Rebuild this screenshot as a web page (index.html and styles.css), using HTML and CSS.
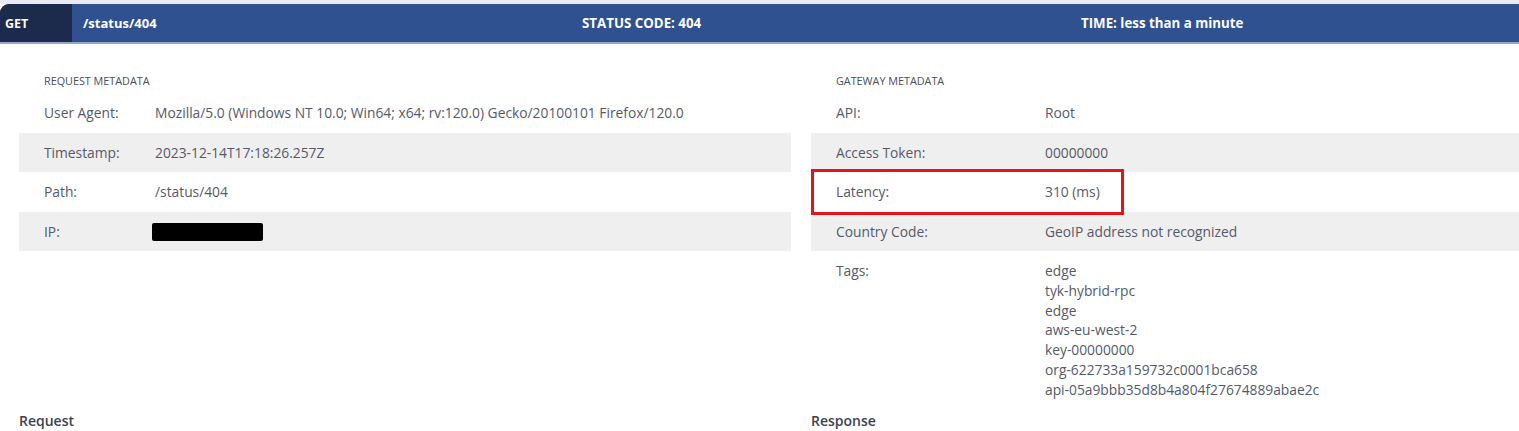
FILE: index.html
```html
<!DOCTYPE html>
<html>
<head>
<meta charset="utf-8">
<link rel="stylesheet" href="styles.css">
</head>
<body>
<div class="topstrip"></div>
<div class="bar">
  <div class="method">GET</div>
  <div class="cell path">/status/404</div>
  <div class="cell"><span><span class="lbl">STATUS CODE:</span> <span class="val">404</span></span></div>
  <div class="cell"><span><span class="lbl">TIME:</span> <span class="val">less than a minute</span></span></div>
</div>
<div class="content">
  <section class="meta left">
    <h4 class="meta-title">REQUEST METADATA</h4>
    <div class="row"><div class="k">User Agent:</div><div class="v">Mozilla/5.0 (Windows NT 10.0; Win64; x64; rv:120.0) Gecko/20100101 Firefox/120.0</div></div>
    <div class="row alt"><div class="k">Timestamp:</div><div class="v">2023-12-14T17:18:26.257Z</div></div>
    <div class="row"><div class="k">Path:</div><div class="v">/status/404</div></div>
    <div class="row alt"><div class="k">IP:</div><div class="v"><span class="redact"></span></div></div>
  </section>
  <section class="meta right">
    <h4 class="meta-title">GATEWAY METADATA</h4>
    <div class="row"><div class="k">API:</div><div class="v">Root</div></div>
    <div class="row alt"><div class="k">Access Token:</div><div class="v">00000000</div></div>
    <div class="row hl"><div class="k">Latency:</div><div class="v">310 (ms)</div><div class="mark"></div></div>
    <div class="row alt"><div class="k">Country Code:</div><div class="v">GeoIP address not recognized</div></div>
    <div class="row tags"><div class="k">Tags:</div><div class="v">
      <div>edge</div><div>tyk-hybrid-rpc</div><div>edge</div><div>aws-eu-west-2</div><div>key-00000000</div><div>org-622733a159732c0001bca658</div><div>api-05a9bbb35d8b4a804f27674889abae2c</div>
    </div></div>
  </section>
  <h3 class="sub">Request</h3>
  <h3 class="sub">Response</h3>
</div>
</body>
</html>
```
FILE: styles.css
```css
html, body {
  margin: 0;
  padding: 0;
  background: #fff;
  font-family: "Open Sans", "Liberation Sans", sans-serif;
  overflow: hidden;
}
.topstrip {
  height: 4px;
  background: #eae9f4;
}
.bar {
  display: grid;
  grid-template-columns: 72px 499px 499px 1fr;
  height: 38px;
  background: #2f5190;
  border-bottom: 2px solid #93a6cb;
  color: #fff;
  font-size: 13.3px;
  border-top-left-radius: 9px;
}
.method {
  background: #1c2a4b;
  border-top-left-radius: 9px;
  padding-left: 5px;
  font-weight: 700;
  font-size: 12.5px;
  display: flex;
  align-items: center;
}
.cell {
  display: flex;
  align-items: center;
  padding-left: 11px;
  white-space: pre;
}
.path { font-weight: 700; font-size: 13px; }
.lbl { font-weight: 700; }
.val { font-weight: 700; }
.content {
  display: grid;
  grid-template-columns: 772px 1fr;
  column-gap: 20px;
  padding-left: 19px;
  padding-top: 29px;
  color: #555a6b;
}
.meta-title {
  margin: 0;
  padding-left: 25px;
  height: 20px;
  font-size: 10.8px;
  font-weight: 400;
  line-height: 16px;
  color: #4a4d5c;
}
.row {
  display: flex;
  align-items: center;
  height: 39.5px;
  padding-left: 25px;
  font-size: 13.8px;
  position: relative;
}
.row.alt { background: #efefef; }
.left .k { width: 111px; flex: none; }
.right .k { width: 209px; flex: none; }
.redact {
  display: inline-block;
  width: 111px;
  height: 18px;
  background: #000;
  border-radius: 2px;
  vertical-align: middle;
  margin-left: -3px;
}
.row.tags {
  height: auto;
  align-items: flex-start;
  padding-top: 10px;
  line-height: 19.8px;
}
.row.hl { z-index: 2; }
.mark {
  position: absolute;
  left: 0;
  top: -3px;
  width: 307px;
  height: 40px;
  border: 3px solid #e8121a;
}
.sub {
  margin: 0;
  font-size: 14px;
  font-weight: 600;
  color: #3d4252;
  line-height: 20px;
  margin-top: 11px;
}
```
